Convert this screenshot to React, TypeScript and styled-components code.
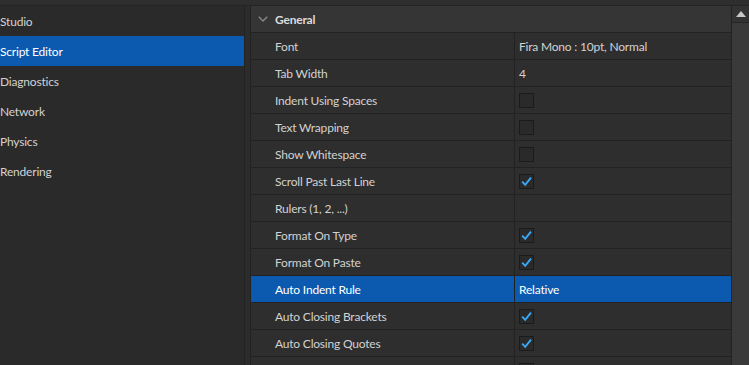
import styled, { createGlobalStyle } from 'styled-components';

const Global = createGlobalStyle`
  html, body {
    margin: 0;
    padding: 0;
    background: #2e2e2e;
    overflow: hidden;
  }
  * { box-sizing: border-box; }
`;

const Window = styled.div`
  width: 749px;
  height: 365px;
  overflow: hidden;
  display: flex;
  flex-direction: column;
  background: #2e2e2e;
  font-family: Lato, 'Liberation Sans', sans-serif;
  font-size: 12px;
  letter-spacing: -0.2px;
  color: #d2d2d2;
`;

const TopStrip = styled.div`
  height: 6px;
  flex: none;
  border-bottom: 1px solid #242424;
  background: #2e2e2e;
`;

const Body = styled.div`
  flex: 1;
  display: flex;
  min-height: 0;
`;

const Sidebar = styled.div`
  width: 245px;
  flex: none;
  background: #2a2a2a;
  border-right: 1px solid #222;
  display: flex;
  flex-direction: column;
`;

const NavItem = styled.div<{ $active?: boolean }>`
  height: 30px;
  display: flex;
  align-items: center;
  background: ${p => (p.$active ? '#0b5aaf' : 'transparent')};
  color: ${p => (p.$active ? '#ffffff' : '#d2d2d2')};
`;

const Gutter = styled.div`
  width: 5px;
  flex: none;
  background: #2c2c2c;
`;

const Main = styled.div`
  flex: 1;
  display: flex;
  border-left: 1px solid #222;
  min-width: 0;
  overflow: hidden;
`;

const Table = styled.div`
  flex: 1;
  display: flex;
  flex-direction: column;
  background: #2e2e2e;
  border-right: 1px solid #222;
  overflow: hidden;
`;

const Header = styled.div`
  height: 27px;
  flex: none;
  display: flex;
  align-items: center;
  background: #353535;
  border-bottom: 1px solid #222;
  font-weight: 700;
  color: #dcdcdc;
`;

const Chevron = styled.span`
  width: 24px;
  display: flex;
  justify-content: center;
  svg { display: block; }
`;

const Row = styled.div<{ $active?: boolean }>`
  height: 27px;
  flex: none;
  display: grid;
  grid-template-columns: 264px 1fr;
  border-bottom: 1px solid #222;
  background: ${p => (p.$active ? '#0b5aaf' : '#2e2e2e')};
  color: ${p => (p.$active ? '#ffffff' : '#d2d2d2')};
`;

const NameCell = styled.div`
  display: flex;
  align-items: center;
  padding-left: 24px;
  border-right: 1px solid #222;
  white-space: nowrap;
`;

const ValueCell = styled.div`
  display: flex;
  align-items: center;
  padding-left: 4px;
  white-space: nowrap;
`;

const Box = styled.div`
  width: 15px;
  height: 15px;
  background: #2a2a2a;
  border: 1px solid #1b1b1b;
  display: flex;
  align-items: center;
  justify-content: center;
`;

const Scrollbar = styled.div`
  width: 17px;
  flex: none;
  background: #3a3a3a;
  display: flex;
  flex-direction: column;
`;

const ScrollButton = styled.div`
  height: 17px;
  background: #333333;
  border-bottom: 1px solid #262626;
  display: flex;
  align-items: center;
  justify-content: center;
`;

type Setting = { name: string; value?: string; check?: boolean; active?: boolean };

const settings: Setting[] = [
  { name: 'Font', value: 'Fira Mono : 10pt, Normal' },
  { name: 'Tab Width', value: '4' },
  { name: 'Indent Using Spaces', check: false },
  { name: 'Text Wrapping', check: false },
  { name: 'Show Whitespace', check: false },
  { name: 'Scroll Past Last Line', check: true },
  { name: 'Rulers (1, 2, ...)', value: '' },
  { name: 'Format On Type', check: true },
  { name: 'Format On Paste', check: true },
  { name: 'Auto Indent Rule', value: 'Relative', active: true },
  { name: 'Auto Closing Brackets', check: true },
  { name: 'Auto Closing Quotes', check: true },
  // only the top of this row's checkbox shows at the bottom edge
  { name: '', check: true },
];

const nav = ['Studio', 'Script Editor', 'Diagnostics', 'Network', 'Physics', 'Rendering'];

const Check = () => (
  <svg width="13" height="13" viewBox="0 0 13 13">
    <path d="M2.2 6.6 L5.2 9.8 L11 2.6" fill="none" stroke="#3aa8f4" strokeWidth="1.9" />
  </svg>
);

export default function App() {
  return (
    <Window>
      <Global />
      <TopStrip />
      <Body>
        <Sidebar>
          {nav.map(n => (
            <NavItem key={n} $active={n === 'Script Editor'}>
              {n}
            </NavItem>
          ))}
        </Sidebar>
        <Gutter />
        <Main>
          <Table>
            <Header>
              <Chevron>
                <svg width="10" height="6" viewBox="0 0 10 6">
                  <path d="M0.8 0.8 L5 5 L9.2 0.8" fill="none" stroke="#8a8a8a" strokeWidth="1.3" />
                </svg>
              </Chevron>
              General
            </Header>
            {settings.map((s, i) => (
              <Row key={i} $active={s.active}>
                <NameCell>{s.name}</NameCell>
                <ValueCell>
                  {s.check === undefined ? s.value : <Box>{s.check && <Check />}</Box>}
                </ValueCell>
              </Row>
            ))}
          </Table>
          <Scrollbar>
            <ScrollButton>
              <svg width="10" height="6" viewBox="0 0 10 6">
                <path d="M0 6 L5 0 L10 6 Z" fill="#c8c8c8" />
              </svg>
            </ScrollButton>
          </Scrollbar>
        </Main>
      </Body>
    </Window>
  );
}
